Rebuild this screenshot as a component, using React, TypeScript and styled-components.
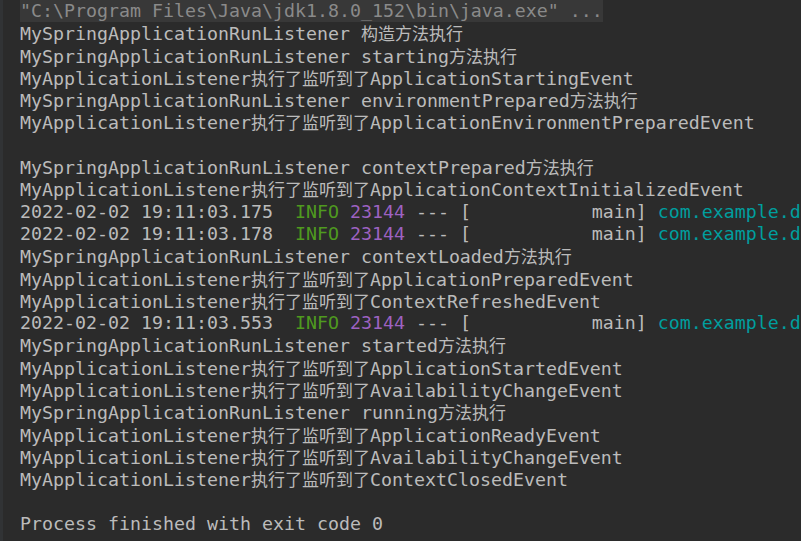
import React from "react";
import styled, { createGlobalStyle } from "styled-components";

const Global = createGlobalStyle`
  html, body { margin: 0; padding: 0; background: #2b2b2b; }
  body { overflow: hidden; }
`;

const Console = styled.div`
  display: flex;
  width: 801px;
  height: 541px;
  background: #2b2b2b;
  overflow: hidden;
`;

const Gutter = styled.div`
  width: 3px;
  flex: none;
  background: #313335;
`;

const Output = styled.div`
  display: flex;
  flex-direction: column;
  padding-left: 17px;
  font-family: "DejaVu Sans Mono", "Liberation Mono", monospace;
  font-size: 18.27px;
  line-height: 22.3px;
  color: #bbbbbb;
  white-space: pre;
`;

const Line = styled.div`
  height: 22.3px;
`;

const Cmd = styled.span`
  display: inline-block;
  color: #8a8a8a;
  background: #383838;
`;

type Tone = "info" | "pid" | "logger";
const toneColor: Record<Tone, string> = {
  info: "#4f9a1f",
  pid: "#9d62c1",
  logger: "#009e9e",
};

const Colored = styled.span<{ $tone: Tone }>`
  color: ${(p) => toneColor[p.$tone]};
`;

const Cjk = styled.span`
  font-family: "Noto Sans CJK SC", sans-serif;
  font-size: 17px;
  color: #bbbbbb;
`;

const renderText = (s: string) => {
  const parts = s.split(/([\u4e00-\u9fff]+)/);
  return parts.map((p, i) =>
    /[\u4e00-\u9fff]/.test(p) ? <Cjk key={i}>{p}</Cjk> : <React.Fragment key={i}>{p}</React.Fragment>
  );
};

const LogLine: React.FC<{ ts: string }> = ({ ts }) => (
  <Line>
    {ts}
    {"  "}
    <Colored $tone="info">INFO</Colored> <Colored $tone="pid">23144</Colored>
    {" --- [           main] "}
    <Colored $tone="logger">com.example.demo.DemoApplication</Colored>
  </Line>
);

const plain = (s: string) => ({ kind: "plain" as const, s });
const log = (ts: string) => ({ kind: "log" as const, s: ts });

const lines = [
  plain("MySpringApplicationRunListener 构造方法执行"),
  plain("MySpringApplicationRunListener starting方法执行"),
  plain("MyApplicationListener执行了监听到了ApplicationStartingEvent"),
  plain("MySpringApplicationRunListener environmentPrepared方法执行"),
  plain("MyApplicationListener执行了监听到了ApplicationEnvironmentPreparedEvent"),
  plain(""),
  plain("MySpringApplicationRunListener contextPrepared方法执行"),
  plain("MyApplicationListener执行了监听到了ApplicationContextInitializedEvent"),
  log("2022-02-02 19:11:03.175"),
  log("2022-02-02 19:11:03.178"),
  plain("MySpringApplicationRunListener contextLoaded方法执行"),
  plain("MyApplicationListener执行了监听到了ApplicationPreparedEvent"),
  plain("MyApplicationListener执行了监听到了ContextRefreshedEvent"),
  log("2022-02-02 19:11:03.553"),
  plain("MySpringApplicationRunListener started方法执行"),
  plain("MyApplicationListener执行了监听到了ApplicationStartedEvent"),
  plain("MyApplicationListener执行了监听到了AvailabilityChangeEvent"),
  plain("MySpringApplicationRunListener running方法执行"),
  plain("MyApplicationListener执行了监听到了ApplicationReadyEvent"),
  plain("MyApplicationListener执行了监听到了AvailabilityChangeEvent"),
  plain("MyApplicationListener执行了监听到了ContextClosedEvent"),
  plain(""),
  plain("Process finished with exit code 0"),
];

export default function App() {
  return (
    <>
      <Global />
      <Console>
        <Gutter />
        <Output>
          <Line>
            <Cmd>{'"C:\\Program Files\\Java\\jdk1.8.0_152\\bin\\java.exe" ...'}</Cmd>
          </Line>
          {lines.map((l, i) =>
            l.kind === "log" ? <LogLine key={i} ts={l.s} /> : <Line key={i}>{renderText(l.s)}</Line>
          )}
        </Output>
      </Console>
    </>
  );
}
